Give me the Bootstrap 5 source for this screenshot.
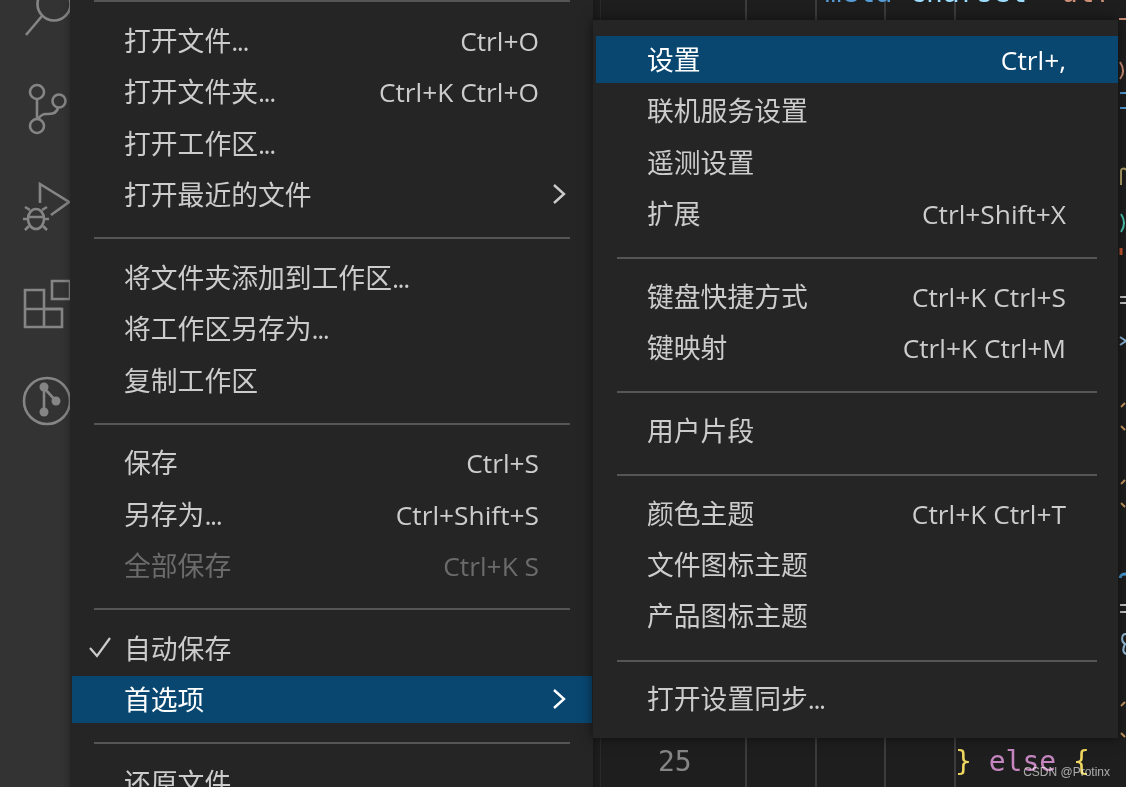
<!DOCTYPE html>
<html lang="zh-CN">
<head>
  <meta charset="UTF-8" />
  <meta name="viewport" content="width=device-width, initial-scale=1.0"/>
  <title>首选项菜单</title>
  <link href="https://cdn.jsdelivr.net/npm/bootstrap@5.3.3/dist/css/bootstrap.min.css" rel="stylesheet" />
  <style>
    html, body { height: 100%; }
    body {
      background-color: #1e1e1e;
      overflow: hidden;
      font-family: "Open Sans", "Noto Sans CJK SC", sans-serif;
    }
    .workbench {
      position: relative;
      width: 1126px;
      height: 787px;
      overflow: hidden;
      filter: blur(.45px);
    }
    .activity-bar {
      width: 70px;
      flex: 0 0 70px;
      background-color: #333333;
    }
    .activity-bar svg { display: block; }
    .editor-pane {
      position: relative;
      flex: 1 1 auto;
      background-color: #1e1e1e;
    }
    .code-font {
      position: absolute;
      font-family: "DejaVu Sans Mono", "Liberation Mono", monospace;
      font-size: 28px;
      line-height: 32px;
      white-space: pre;
    }
    .line-no { left: 588px; top: 746px; color: #858585; }
    .line-top { left: 738px; top: -23px; }
    .line-else { left: 885px; top: 746px; }
    .tok-tag { color: #569cd6; }
    .tok-attr { color: #9cdcfe; }
    .tok-str { color: #ce9178; }
    .tok-brace { color: #f0d860; }
    .tok-kw { color: #c586c0; }
    .indent-guide {
      position: absolute;
      top: 0;
      bottom: 0;
      width: 2px;
      background-color: #3c3c3c;
    }
    .guide-a { left: 675px; }
    .guide-b { left: 745px; }
    .guide-c { left: 814px; }
    .guide-d { left: 884px; }
    .gutter-line {
      position: absolute;
      top: 0;
      bottom: 0;
      left: 530px;
      width: 1px;
      background-color: #2b2b2b;
    }
    .edge-marks { position: absolute; left: 1040px; top: 0; }

    .vs-menu.show {
      display: flex;
      flex-direction: column;
      position: absolute;
      margin: 0;
      border: 0;
      border-radius: 0;
      background-color: #252526;
      font-size: 26.8px;
      color: #cccccc;
    }
    .menu-file {
      left: 70px;
      top: 0;
      width: 523px;
      height: 800px;
      padding: 0 1px 0 2px;
      box-shadow: 0 0 8px rgba(0, 0, 0, .35);
    }
    .menu-prefs {
      left: 593px;
      top: 20px;
      width: 525px;
      height: 718px;
      padding: 14px 0 0 3px;
      box-shadow: 0 0 12px rgba(0, 0, 0, .55);
      z-index: 1001;
    }
    .vs-item {
      display: flex;
      justify-content: space-between;
      align-items: center;
      position: relative;
      flex: 0 0 47px;
      height: 47px;
      margin: 2.17px 0;
      padding: 1px 53px 0 52px;
      color: #cccccc;
      line-height: 46px;
    }
    .menu-prefs .vs-item { padding-left: 51px; padding-right: 52px; }
    .vs-item.active, .vs-item.active:hover { background-color: #094771; color: #ffffff; }
    .vs-item:hover { background-color: transparent; color: #cccccc; }
    .vs-item.disabled { color: #6b6b6b; }
    .vs-keys { font-size: 26.3px; }
    .vs-dots { letter-spacing: -1.4px; }
    .vs-sep {
      flex: 0 0 auto;
      margin: 17px 22px 12.5px;
      border-top: 2px solid #555555;
      opacity: 1;
    }
    .vs-sep-top { margin-top: 0; margin-bottom: 13px; }
    .menu-prefs .vs-sep { margin: 18px 21px 11.5px; }
    .item-check { position: absolute; left: 16px; top: 11px; }
    .item-arrow { position: absolute; right: 26px; top: 12px; }
    .watermark {
      position: absolute;
      right: 16px;
      bottom: 8px;
      font-family: "Liberation Sans", sans-serif;
      font-size: 12px;
      line-height: 14px;
      color: rgba(255, 255, 255, .62);
      z-index: 1002;
    }
  </style>
</head>
<body>
  <div class="workbench d-flex">
    <aside class="activity-bar">
      <svg width="70" height="430" viewBox="0 0 70 430" fill="none" stroke="#858585" stroke-width="2.6">
        <!-- search -->
        <circle cx="54" cy="4" r="16.5"/>
        <path d="M42 16L26 35"/>
        <!-- source control -->
        <circle cx="37" cy="92" r="7"/>
        <circle cx="59" cy="101" r="6.5"/>
        <circle cx="37" cy="126" r="7"/>
        <path d="M37 99V119M58 108C56 114 52 114 46 114C42 114 40 116 38 119"/>
        <!-- run and debug -->
        <path d="M40 203V184L69 202L51 215"/>
        <ellipse cx="36" cy="219" rx="8" ry="10"/>
        <path d="M28 217H44M30 210L25 207M42 210L47 207M27 219H23M45 219H49M29 226L25 230M43 226L47 230"/>
        <!-- extensions -->
        <path d="M52 281H70V299H52Z"/>
        <path d="M25 290H44V327H25ZM25 309H62V327H44"/>
        <path d="M44 309H62"/>
        <!-- git graph -->
        <circle cx="47" cy="401" r="23"/>
        <path d="M44 388V412M44 388L56 401"/>
        <g fill="#858585" stroke="none">
          <circle cx="44" cy="387" r="4.5"/>
          <circle cx="56" cy="401" r="4.5"/>
          <circle cx="44" cy="412" r="4.5"/>
        </g>
      </svg>
    </aside>

    <main class="editor-pane">
      <div class="gutter-line"></div>
      <div class="indent-guide guide-a"></div>
      <div class="indent-guide guide-b"></div>
      <div class="indent-guide guide-c"></div>
      <div class="indent-guide guide-d"></div>
      <div class="code-font line-top"><span class="tok-tag">&lt;meta</span> <span class="tok-attr">charset</span>=<span class="tok-str">"utf</span></div>
      <div class="code-font line-no">25</div>
      <div class="code-font line-else"><span class="tok-brace">}</span> <span class="tok-kw">else</span> <span class="tok-brace">{</span></div>
      <svg class="edge-marks" width="16" height="787" fill="none" stroke-width="2">
        <path d="M10 62C14 68 14 74 10 79" stroke="#ce9178"/>
        <path d="M10 93H16M10 108H16" stroke="#569cd6"/>
        <path d="M11 185V171C11 168 15 168 16 170" stroke="#b5a66a"/>
        <path d="M11 214C15 220 15 226 11 232" stroke="#4ec9b0"/>
        <path d="M11 248V255" stroke="#c9572f" stroke-width="3"/>
        <path d="M10 297H16M10 303H16" stroke="#c8c8c8"/>
        <path d="M10 337L16 341L10 345" stroke="#8fb8de"/>
        <path d="M11 407L15 403M11 426L15 430M11 484L15 480M11 503L15 507" stroke="#c79a62"/>
        <path d="M10 578C11 574 13 574 16 574" stroke="#4a9fd8" stroke-width="3"/>
        <path d="M10 605H16M10 612H16" stroke="#c8c8c8"/>
        <path d="M16 634C11 634 11 642 15 644C13 648 12 652 16 654" stroke="#9cc4e0"/>
        <path d="M11 706L15 702M11 733L15 737" stroke="#c79a62"/>
        <path d="M9 19H16" stroke="#ce9178" stroke-width="2"/>
      </svg>
    </main>

    <div class="dropdown-menu show vs-menu menu-file">
      <hr class="dropdown-divider vs-sep vs-sep-top">
      <a class="dropdown-item vs-item" href="#"><span>打开文件<span class="vs-dots">...</span></span><span class="vs-keys">Ctrl+O</span></a>
      <a class="dropdown-item vs-item" href="#"><span>打开文件夹<span class="vs-dots">...</span></span><span class="vs-keys">Ctrl+K Ctrl+O</span></a>
      <a class="dropdown-item vs-item" href="#"><span>打开工作区<span class="vs-dots">...</span></span></a>
      <a class="dropdown-item vs-item" href="#"><span>打开最近的文件</span>
        <svg class="item-arrow" width="14" height="22" viewBox="0 0 14 22" fill="none" stroke="#cccccc" stroke-width="2.4"><path d="M2 2L12 11L2 20"/></svg>
      </a>
      <hr class="dropdown-divider vs-sep">
      <a class="dropdown-item vs-item" href="#"><span>将文件夹添加到工作区<span class="vs-dots">...</span></span></a>
      <a class="dropdown-item vs-item" href="#"><span>将工作区另存为<span class="vs-dots">...</span></span></a>
      <a class="dropdown-item vs-item" href="#"><span>复制工作区</span></a>
      <hr class="dropdown-divider vs-sep">
      <a class="dropdown-item vs-item" href="#"><span>保存</span><span class="vs-keys">Ctrl+S</span></a>
      <a class="dropdown-item vs-item" href="#"><span>另存为<span class="vs-dots">...</span></span><span class="vs-keys">Ctrl+Shift+S</span></a>
      <a class="dropdown-item vs-item disabled" href="#"><span>全部保存</span><span class="vs-keys">Ctrl+K S</span></a>
      <hr class="dropdown-divider vs-sep">
      <a class="dropdown-item vs-item" href="#">
        <svg class="item-check" width="24" height="22" viewBox="0 0 24 22" fill="none" stroke="#cccccc" stroke-width="2.2"><path d="M2 12L9 20L22 2"/></svg>
        <span>自动保存</span>
      </a>
      <a class="dropdown-item vs-item active" href="#"><span>首选项</span>
        <svg class="item-arrow" width="14" height="22" viewBox="0 0 14 22" fill="none" stroke="#ffffff" stroke-width="2.4"><path d="M2 2L12 11L2 20"/></svg>
      </a>
      <hr class="dropdown-divider vs-sep">
      <a class="dropdown-item vs-item" href="#"><span>还原文件</span></a>
    </div>

    <div class="dropdown-menu show vs-menu menu-prefs">
      <a class="dropdown-item vs-item active" href="#"><span>设置</span><span class="vs-keys">Ctrl+,</span></a>
      <a class="dropdown-item vs-item" href="#"><span>联机服务设置</span></a>
      <a class="dropdown-item vs-item" href="#"><span>遥测设置</span></a>
      <a class="dropdown-item vs-item" href="#"><span>扩展</span><span class="vs-keys">Ctrl+Shift+X</span></a>
      <hr class="dropdown-divider vs-sep">
      <a class="dropdown-item vs-item" href="#"><span>键盘快捷方式</span><span class="vs-keys">Ctrl+K Ctrl+S</span></a>
      <a class="dropdown-item vs-item" href="#"><span>键映射</span><span class="vs-keys">Ctrl+K Ctrl+M</span></a>
      <hr class="dropdown-divider vs-sep">
      <a class="dropdown-item vs-item" href="#"><span>用户片段</span></a>
      <hr class="dropdown-divider vs-sep">
      <a class="dropdown-item vs-item" href="#"><span>颜色主题</span><span class="vs-keys">Ctrl+K Ctrl+T</span></a>
      <a class="dropdown-item vs-item" href="#"><span>文件图标主题</span></a>
      <a class="dropdown-item vs-item" href="#"><span>产品图标主题</span></a>
      <hr class="dropdown-divider vs-sep">
      <a class="dropdown-item vs-item" href="#"><span>打开设置同步<span class="vs-dots">...</span></span></a>
    </div>

    <div class="watermark">CSDN @Protinx</div>
  </div>

  <script src="https://cdn.jsdelivr.net/npm/bootstrap@5.3.3/dist/js/bootstrap.bundle.min.js"></script>
</body>
</html>
